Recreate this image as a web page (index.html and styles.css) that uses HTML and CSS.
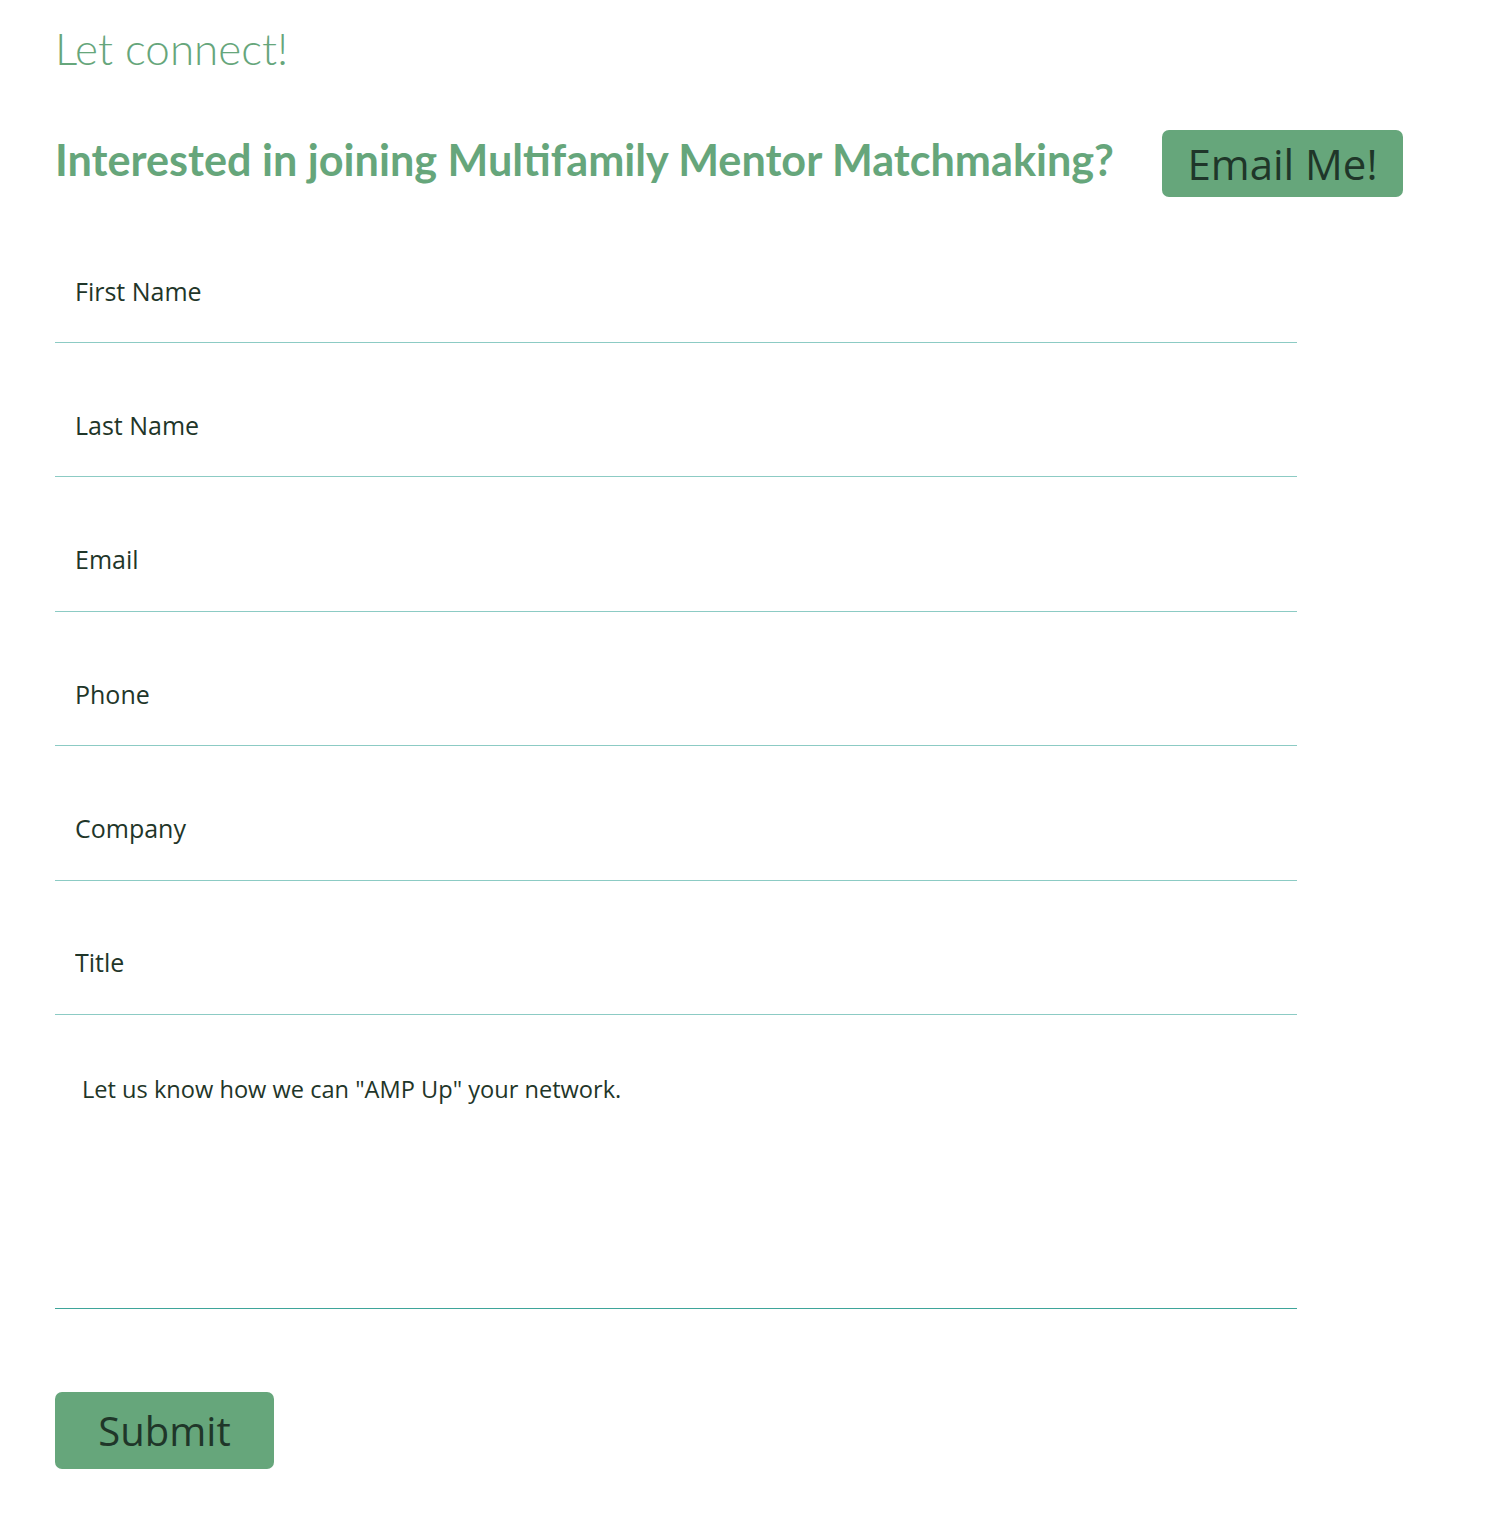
FILE: index.html
```html
<!DOCTYPE html>
<html lang="en">
<head>
<meta charset="utf-8">
<title>Let connect!</title>
<link rel="stylesheet" href="styles.css">
</head>
<body>
<main class="page">
  <h1 class="title">Let connect!</h1>
  <div class="cta-row">
    <h2 class="cta-heading">Interested in joining Multifamily Mentor Matchmaking?</h2>
    <a class="btn btn-email" href="#">Email Me!</a>
  </div>
  <form class="form">
    <input class="field" type="text" placeholder="First Name">
    <input class="field" type="text" placeholder="Last Name">
    <input class="field" type="email" placeholder="Email">
    <input class="field" type="tel" placeholder="Phone">
    <input class="field" type="text" placeholder="Company">
    <input class="field" type="text" placeholder="Title">
    <textarea class="message" placeholder="Let us know how we can &quot;AMP Up&quot; your network."></textarea>
    <button class="btn btn-submit" type="button">Submit</button>
  </form>
</main>
</body>
</html>
```

FILE: styles.css
```css
html, body {
  margin: 0;
  padding: 0;
  background: #ffffff;
}

body {
  font-family: "Open Sans", "Liberation Sans", sans-serif;
  color: #1f3629;
}

.page {
  padding: 22px 0 40px 55px;
  width: 1242px;
}

.title {
  margin: 0;
  font-family: "Lato", "Open Sans", sans-serif;
  font-weight: 300;
  font-size: 44px;
  line-height: 52px;
  color: #66a67b;
}

.cta-row {
  display: flex;
  align-items: center;
  gap: 48px;
  margin-top: 56px;
  width: 1400px;
}

.cta-heading {
  margin: 0 0 9px 0;
  font-family: "Lato", "Open Sans", sans-serif;
  font-weight: 700;
  font-size: 43.2px;
  line-height: 56px;
  color: #66a67b;
}

.btn {
  display: inline-flex;
  align-items: center;
  justify-content: center;
  background: #66a67b;
  color: #1f3629;
  border: none;
  border-radius: 7px;
  font-family: "Open Sans", "Liberation Sans", sans-serif;
  text-decoration: none;
  box-sizing: border-box;
  cursor: pointer;
}

.btn-email {
  width: 241px;
  height: 67px;
  font-size: 42px;
  flex: none;
}

.form {
  display: flex;
  flex-direction: column;
  margin-top: 45px;
}

.field {
  display: block;
  width: 100%;
  height: 101px;
  box-sizing: border-box;
  margin: 0 0 33.4px 0;
  padding: 0 20px 3px 20px;
  border: none;
  border-bottom: 1px solid #8ccbc4;
  font-family: "Open Sans", "Liberation Sans", sans-serif;
  font-size: 25px;
  color: #1f3629;
  background: transparent;
  outline: none;
}

.field::placeholder,
.message::placeholder {
  color: #1f3629;
  opacity: 1;
}

.message {
  display: block;
  width: 100%;
  height: 261px;
  box-sizing: border-box;
  padding: 25px 27px 0 27px;
  border: none;
  border-bottom: 1px solid #3ea59a;
  font-family: "Open Sans", "Liberation Sans", sans-serif;
  font-size: 23.6px;
  line-height: 32px;
  color: #1f3629;
  background: transparent;
  resize: none;
  outline: none;
}

.btn-submit {
  margin-top: 83px;
  width: 219px;
  height: 77px;
  font-size: 40px;
  padding: 0;
}
```
